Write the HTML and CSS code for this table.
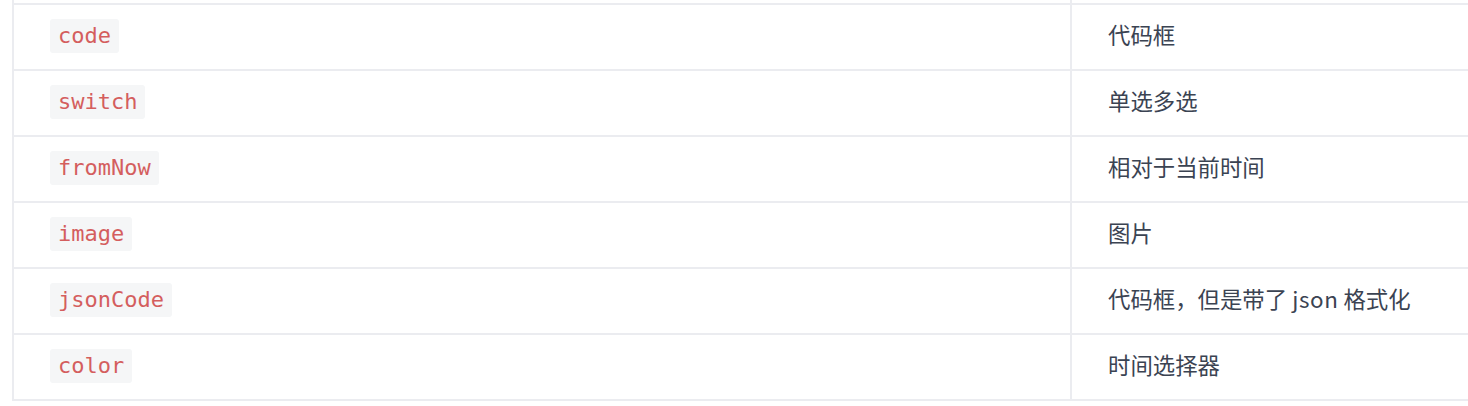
FILE: index.html
```html
<!DOCTYPE html>
<html lang="zh-CN">
<head>
<meta charset="utf-8">
<title>Table</title>
<link rel="stylesheet" href="styles.css">
</head>
<body>
<table class="props">
  <tbody>
    <tr class="spacer"><td class="key"></td><td class="desc"></td></tr>
    <tr><td class="key"><code>code</code></td><td class="desc">代码框</td></tr>
    <tr><td class="key"><code>switch</code></td><td class="desc">单选多选</td></tr>
    <tr><td class="key"><code>fromNow</code></td><td class="desc">相对于当前时间</td></tr>
    <tr><td class="key"><code>image</code></td><td class="desc">图片</td></tr>
    <tr><td class="key"><code>jsonCode</code></td><td class="desc">代码框，但是带了 <span class="latin">json</span> 格式化</td></tr>
    <tr><td class="key"><code>color</code></td><td class="desc">时间选择器</td></tr>
  </tbody>
</table>
</body>
</html>
```

FILE: styles.css
```css
html, body {
  margin: 0;
  padding: 0;
  background: #ffffff;
  overflow: hidden;
}

body {
  font-family: "Noto Sans CJK SC", "Noto Sans", sans-serif;
  font-size: 22.4px;
  color: #3b4352;
}

.props {
  margin: -61px 0 0 12px;
  width: 1456px;
  border-collapse: separate;
  border-spacing: 0;
  table-layout: fixed;
}

.props td {
  height: 60px;
  padding: 0 36px 4px;
  border-left: 2px solid #ebecf0;
  border-bottom: 2px solid #ebecf0;
  vertical-align: middle;
  text-align: left;
  white-space: nowrap;
}

.props td.desc {
  padding-bottom: 6px;
  height: 58px;
}

.props td.key {
  width: 984px;
}

.latin {
  letter-spacing: 0.6px;
}

.props code {
  display: inline-block;
  font-family: "DejaVu Sans Mono", "Liberation Mono", monospace;
  font-size: 22px;
  line-height: 26px;
  padding: 4px 8px;
  color: #d45e5e;
  background: #f5f6f7;
  border-radius: 3px;
}
```
